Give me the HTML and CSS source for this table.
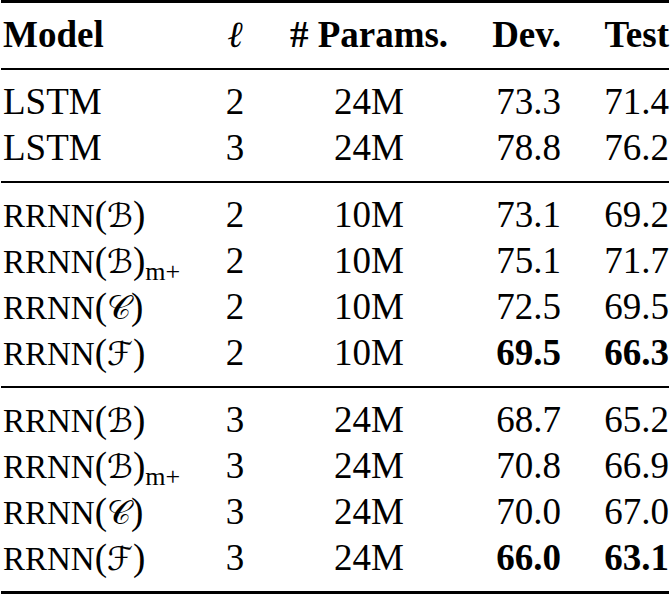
FILE: index.html
```html
<!DOCTYPE html>
<html lang="en">
<head>
<meta charset="utf-8">
<title>Results</title>
<link rel="stylesheet" href="styles.css">
</head>
<body>
<table class="results">
  <colgroup>
    <col class="c-model"><col class="c-ell"><col class="c-params"><col class="c-dev"><col class="c-test">
  </colgroup>
  <thead>
    <tr class="first last">
      <th class="model">Model</th>
      <th class="ell"><span class="ell-glyph">ℓ</span></th>
      <th class="center"># Params.</th>
      <th class="num">Dev.</th>
      <th class="num">Test</th>
    </tr>
  </thead>
  <tbody>
    <tr class="first"><td class="model">LSTM</td><td class="center">2</td><td class="center">24M</td><td class="num">73.3</td><td class="num">71.4</td></tr>
    <tr class="last"><td class="model">LSTM</td><td class="center">3</td><td class="center">24M</td><td class="num">78.8</td><td class="num">76.2</td></tr>
  </tbody>
  <tbody>
    <tr class="first"><td class="model"><span class="sc">RRNN</span>(<span class="cal">ℬ</span>)</td><td class="center">2</td><td class="center">10M</td><td class="num">73.1</td><td class="num">69.2</td></tr>
    <tr><td class="model"><span class="sc">RRNN</span>(<span class="cal">ℬ</span>)<span class="sub">m+</span></td><td class="center">2</td><td class="center">10M</td><td class="num">75.1</td><td class="num">71.7</td></tr>
    <tr><td class="model"><span class="sc">RRNN</span>(<span class="cal">𝒞</span>)</td><td class="center">2</td><td class="center">10M</td><td class="num">72.5</td><td class="num">69.5</td></tr>
    <tr class="last"><td class="model"><span class="sc">RRNN</span>(<span class="cal">ℱ</span>)</td><td class="center">2</td><td class="center">10M</td><td class="num"><b>69.5</b></td><td class="num"><b>66.3</b></td></tr>
  </tbody>
  <tbody class="final">
    <tr class="first"><td class="model"><span class="sc">RRNN</span>(<span class="cal">ℬ</span>)</td><td class="center">3</td><td class="center">24M</td><td class="num">68.7</td><td class="num">65.2</td></tr>
    <tr><td class="model"><span class="sc">RRNN</span>(<span class="cal">ℬ</span>)<span class="sub">m+</span></td><td class="center">3</td><td class="center">24M</td><td class="num">70.8</td><td class="num">66.9</td></tr>
    <tr><td class="model"><span class="sc">RRNN</span>(<span class="cal">𝒞</span>)</td><td class="center">3</td><td class="center">24M</td><td class="num">70.0</td><td class="num">67.0</td></tr>
    <tr class="last"><td class="model"><span class="sc">RRNN</span>(<span class="cal">ℱ</span>)</td><td class="center">3</td><td class="center">24M</td><td class="num"><b>66.0</b></td><td class="num"><b>63.1</b></td></tr>
  </tbody>
</table>
</body>
</html>
```

FILE: styles.css
```css
html, body {
  margin: 0;
  padding: 0;
  background: #ffffff;
}

body {
  font-family: "Liberation Serif", "Times New Roman", serif;
  color: #000000;
}

.results {
  border-collapse: separate;
  border-spacing: 0;
  table-layout: fixed;
  width: 668px;
  margin-left: 1px;
  font-size: 37px;
}

.c-model { width: 206px; }
.c-ell { width: 56px; }
.c-params { width: 212px; }
.c-dev { width: 86px; }
.c-test { width: 108px; }

.results th,
.results td {
  padding: 0 0 5px 0;
  line-height: 41px;
  white-space: nowrap;
  vertical-align: top;
}

.results th {
  font-weight: bold;
}

.results tr.first > * {
  padding-top: 11px;
}

.results tr.last > * {
  padding-bottom: 13px;
}

.results thead tr > * {
  border-top: 3px solid #000;
}

.results tbody tr.first > * {
  border-top: 2px solid #000;
}

.results tbody.final tr.last > * {
  border-bottom: 3px solid #000;
}

.model {
  text-align: left;
  padding-left: 2px !important;
}

.center {
  text-align: center;
}

.num {
  text-align: right;
}

.ell {
  text-align: center;
}

.ell-glyph {
  font-weight: normal;
  font-style: italic;
}

.sc {
  font-size: 33px;
  line-height: 0;
}

.cal {
  font-family: "DejaVu Serif", "DejaVu Sans", serif;
  font-size: 33px;
  line-height: 0;
}

.sub {
  font-size: 26px;
  line-height: 0;
  vertical-align: -7px;
}
```
